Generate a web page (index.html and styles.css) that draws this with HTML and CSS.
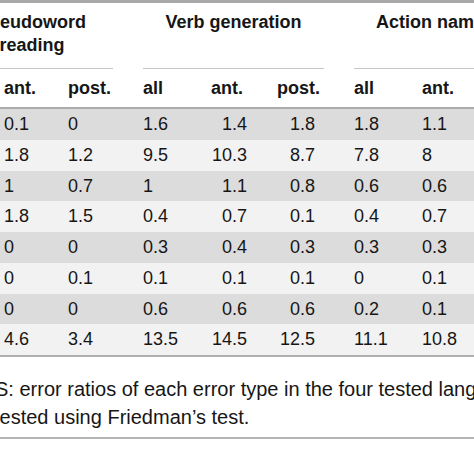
FILE: index.html
```html
<!DOCTYPE html>
<html>
<head>
<meta charset="utf-8">
<link rel="stylesheet" href="styles.css">
</head>
<body>
<div class="page">
  <div class="topbar"></div>
  <div class="tablewrap">
    <table class="data">
      <colgroup>
        <col class="c1"><col class="c2"><col class="c3">
        <col class="c4"><col class="c5"><col class="c6">
        <col class="c7"><col class="c8"><col class="c9">
      </colgroup>
      <thead>
        <tr class="groups">
          <th colspan="3"><div class="grp">Pseudoword<br>reading</div></th>
          <th colspan="3"><div class="grp">Verb generation</div></th>
          <th colspan="3"><div class="grp">Action naming</div></th>
        </tr>
        <tr class="subs">
          <th>all</th><th>ant.</th><th>post.</th>
          <th>all</th><th>ant.</th><th>post.</th>
          <th>all</th><th>ant.</th><th>post.</th>
        </tr>
      </thead>
      <tbody>
        <tr><td></td><td>0.1</td><td>0</td><td>1.6</td><td class="r">1.4</td><td class="rp">1.8</td><td>1.8</td><td>1.1</td><td></td></tr>
        <tr><td></td><td>1.8</td><td>1.2</td><td>9.5</td><td class="r">10.3</td><td class="rp">8.7</td><td>7.8</td><td>8</td><td></td></tr>
        <tr><td></td><td>1</td><td>0.7</td><td>1</td><td class="r">1.1</td><td class="rp">0.8</td><td>0.6</td><td>0.6</td><td></td></tr>
        <tr><td></td><td>1.8</td><td>1.5</td><td>0.4</td><td class="r">0.7</td><td class="rp">0.1</td><td>0.4</td><td>0.7</td><td></td></tr>
        <tr><td></td><td>0</td><td>0</td><td>0.3</td><td class="r">0.4</td><td class="rp">0.3</td><td>0.3</td><td>0.3</td><td></td></tr>
        <tr><td></td><td>0</td><td>0.1</td><td>0.1</td><td class="r">0.1</td><td class="rp">0.1</td><td>0</td><td>0.1</td><td></td></tr>
        <tr><td></td><td>0</td><td>0</td><td>0.6</td><td class="r">0.6</td><td class="rp">0.6</td><td>0.2</td><td>0.1</td><td></td></tr>
        <tr><td></td><td>4.6</td><td>3.4</td><td>13.5</td><td class="r">14.5</td><td class="rp">12.5</td><td>11.1</td><td>10.8</td><td></td></tr>
      </tbody>
    </table>
  </div>
  <div class="foot">
    <div class="line1">S: error ratios of each error type in the four tested languages</div>
    <div class="line2">tested using Friedman’s test.</div>
  </div>
</div>
</body>
</html>
```
FILE: styles.css
```css
html, body {
  margin: 0;
  padding: 0;
  background: #ffffff;
  overflow: hidden;
}
.page {
  width: 474px;
  height: 474px;
  overflow: hidden;
  font-family: "Liberation Sans", Arial, Helvetica, sans-serif;
  color: #161616;
}
.topbar {
  height: 3px;
  background: #a9a9a9;
}
.tablewrap {
  width: 474px;
  overflow: hidden;
}
.data {
  margin-left: -64px;
  border-collapse: separate;
  border-spacing: 0;
  table-layout: fixed;
  width: 582px;
  font-size: 18px;
}
.c1 { width: 53px; }
.c2 { width: 64px; }
.c3 { width: 75px; }
.c4 { width: 68px; }
.c5 { width: 66px; }
.c6 { width: 77px; }
.c7 { width: 68px; }
.c8 { width: 66px; }
.c9 { width: 65px; }
.data th, .data td {
  padding: 0 15px;
  white-space: nowrap;
  text-align: left;
}
.groups th {
  vertical-align: top;
  text-align: center;
  font-weight: bold;
}
.grp {
  box-sizing: border-box;
  height: 66px;
  padding-top: 8px;
  line-height: 23px;
  border-bottom: 1px solid #c6c6c6;
  white-space: nowrap;
}
.subs th {
  line-height: 38px;
  font-weight: bold;
  border-bottom: 2px solid #acacac;
}
.data td {
  line-height: 30.75px;
  font-weight: normal;
}
.data tbody tr:nth-child(odd) td { background: #dcdcdc; }
.data tbody tr:nth-child(even) td { background: #f2f2f2; }
.data tbody tr:last-child td { border-bottom: 2px solid #b0b0b0; }
.data td.r { text-align: right; }
.data td.rp { text-align: right; padding-right: 24px; }
.foot {
  padding: 18px 0 6px 0;
  border-bottom: 2px solid #b4b4b4;
  font-size: 20px;
  line-height: 28px;
  white-space: nowrap;
  overflow: hidden;
}
.line1 { text-indent: -5px; }
.line2 { text-indent: -6px; }
```
